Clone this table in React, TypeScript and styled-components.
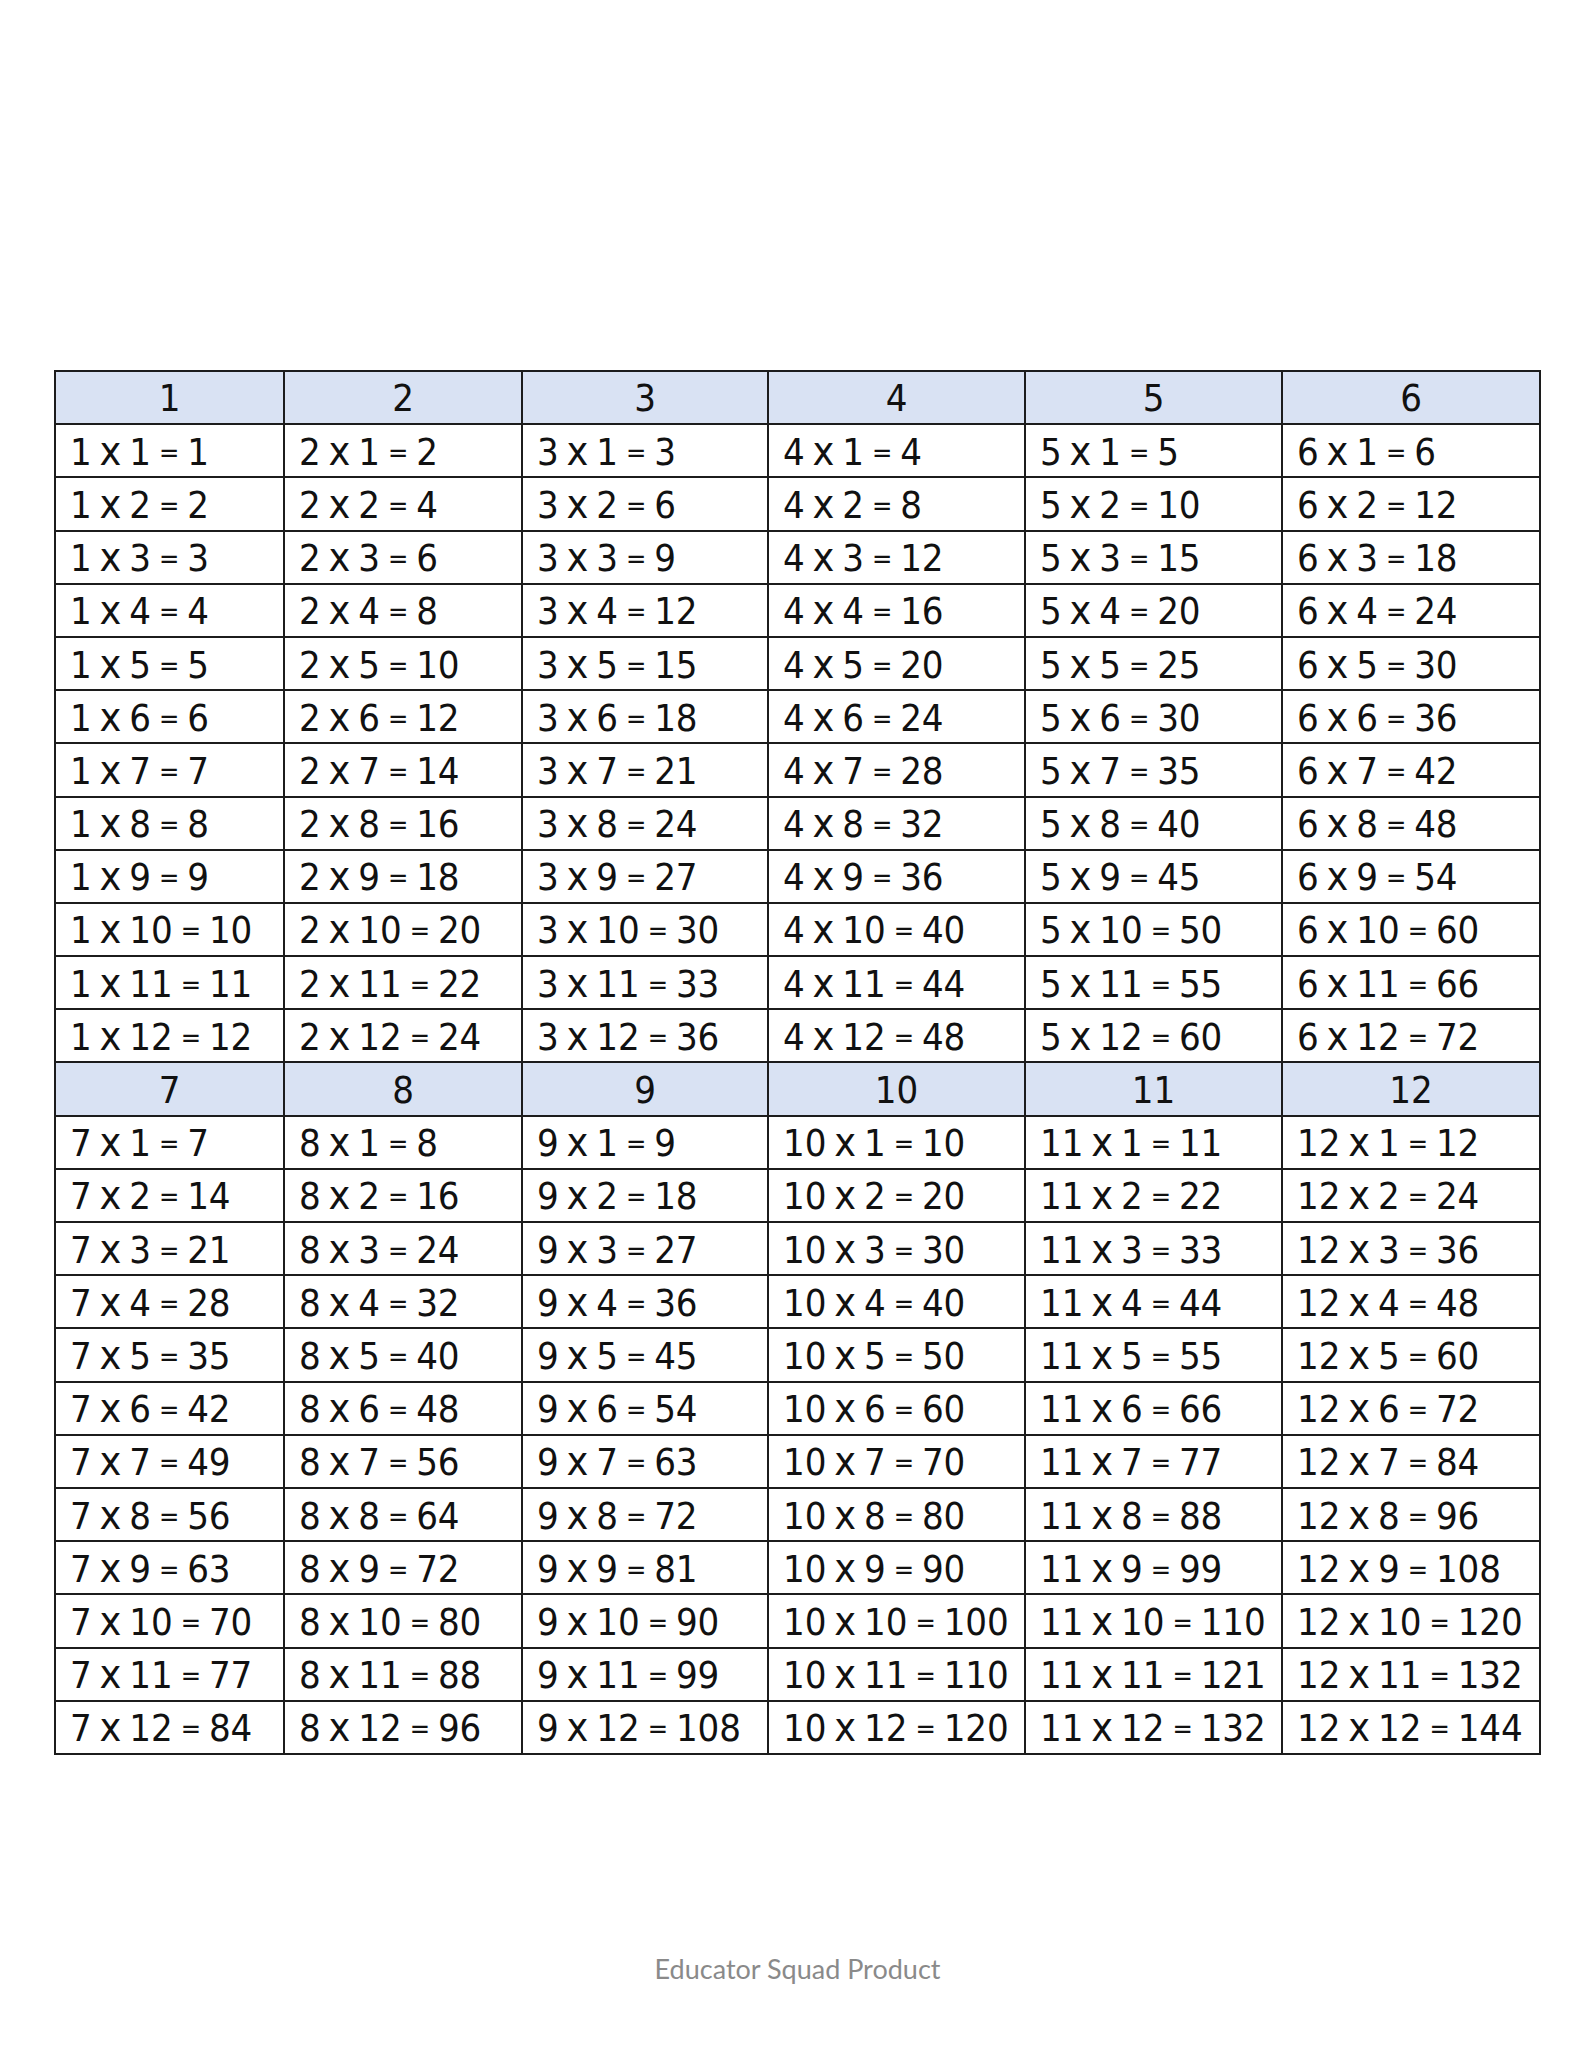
import styled, { createGlobalStyle } from 'styled-components';

const GlobalStyle = createGlobalStyle`
  html, body {
    margin: 0;
    padding: 0;
    background: #ffffff;
  }
`;

const Page = styled.div`
  width: 1588px;
  height: 2047px;
  box-sizing: border-box;
  padding: 370px 47px 0 54px;
  display: flex;
  flex-direction: column;
  background: #ffffff;
`;

const Table = styled.table`
  border-collapse: collapse;
  table-layout: fixed;
  width: 1487px;
  font-family: 'DejaVu Sans Condensed', 'DejaVu Sans', sans-serif;
  font-stretch: condensed;
  font-size: 38px;
  word-spacing: -3px;
  color: #111111;
`;

const Row = styled.tr`
  height: 53.2px;
`;

const HeadCell = styled.td`
  height: 49px;
  padding: 1px 0 0;
  border: 2px solid #1c1c1c;
  background: #d9e2f3;
  text-align: center;
  line-height: 1;
  overflow: hidden;
`;

const Cell = styled.td`
  height: 49px;
  padding: 1px 0 0 14px;
  border: 2px solid #1c1c1c;
  text-align: left;
  line-height: 1;
  white-space: nowrap;
  overflow: hidden;
`;

const Times = styled.span`
  font-size: 41px;
  line-height: 1;
`;

const Equals = styled.span`
  font-size: 27px;
  line-height: 1;
  vertical-align: 3px;
`;

const Footer = styled.div`
  margin-top: 197px;
  text-align: center;
  font-family: Lato, 'Open Sans', sans-serif;
  font-size: 27px;
  color: #8a8a8a;
`;

const columnWidths = [229, 238, 246, 257, 257, 258];
const blocks = [
  [1, 2, 3, 4, 5, 6],
  [7, 8, 9, 10, 11, 12],
];
const multipliers = Array.from({ length: 12 }, (_, i) => i + 1);

const App = () => (
  <>
    <GlobalStyle />
    <Page>
      <Table>
        <colgroup>
          {columnWidths.map((w, i) => (
            <col key={i} style={{ width: w }} />
          ))}
        </colgroup>
        <tbody>
          {blocks.map((block) => [
            <Row key={`h${block[0]}`}>
              {block.map((n) => (
                <HeadCell key={n}>{n}</HeadCell>
              ))}
            </Row>,
            ...multipliers.map((m) => (
              <Row key={`${block[0]}-${m}`}>
                {block.map((n) => (
                  <Cell key={n}>
                    {n} <Times>x</Times> {m} <Equals>=</Equals> {n * m}
                  </Cell>
                ))}
              </Row>
            )),
          ])}
        </tbody>
      </Table>
      <Footer>Educator Squad Product</Footer>
    </Page>
  </>
);

export default App;
